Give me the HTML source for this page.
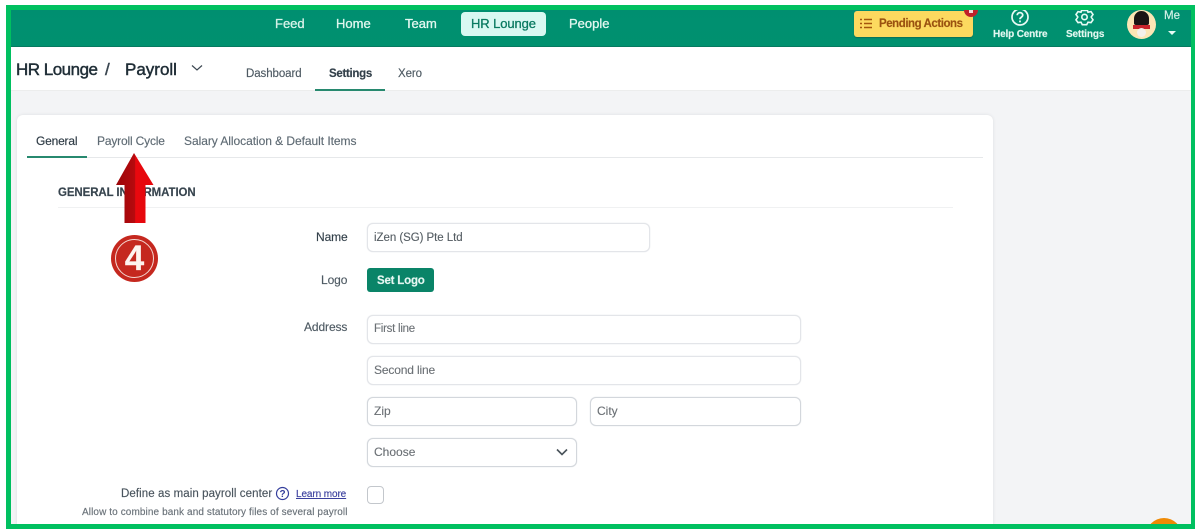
<!DOCTYPE html>
<html><head><meta charset="utf-8"><style>
*{box-sizing:border-box}
html,body{margin:0;padding:0;width:1196px;height:530px;overflow:hidden;background:#fff;font-family:"Liberation Sans",sans-serif}
#s{position:absolute;left:0;top:0;width:1196px;height:530px;overflow:hidden;filter:blur(.35px)}
.a{position:absolute}
.t{position:absolute;white-space:nowrap;line-height:1;-webkit-text-stroke:.15px currentColor}
.n{-webkit-text-stroke:.3px currentColor}
.in{position:absolute;background:#fff;border:1px solid #e3e5e9;border-radius:6px;box-shadow:0 0 1px #d5d8dc}
.ph{position:absolute;left:6px;white-space:nowrap;font-size:12px;line-height:1;color:#6b7075;-webkit-text-stroke:.12px currentColor}
</style></head><body><div id="s">
<div class="a" style="left:10px;top:90px;width:1181px;height:436px;background:#f3f4f6"></div>
<div class="a" style="left:10px;top:47px;width:1181px;height:44px;background:#fff;border-bottom:1px solid #eceded"></div>
<div class="a" style="left:10px;top:10px;width:1181px;height:37px;background:linear-gradient(#008f70,#00916f);border-bottom:1px solid #067a60"></div>

<div class="t n" style="left:275px;top:17px;font-size:13px;color:#d8f3ea">Feed</div>
<div class="t n" style="left:336px;top:17px;font-size:13px;color:#e2f7f0">Home</div>
<div class="t n" style="left:405px;top:17px;font-size:13px;color:#e2f7f0">Team</div>
<div class="a" style="left:461px;top:12px;width:85px;height:24px;background:#d9f8f2;border-radius:4px"></div>
<div class="t n" style="left:471px;top:17px;font-size:13px;color:#0a7a61;letter-spacing:-.1px">HR Lounge</div>
<div class="t n" style="left:569px;top:17px;font-size:13px;color:#e2f7f0">People</div>

<div class="a" style="left:854px;top:11px;width:119px;height:26px;background:#fcd95f;border-radius:3px;box-shadow:0 1px 1px #0a6f58"></div>
<svg class="a" style="left:859px;top:17px" width="14" height="13" viewBox="0 0 14 13" fill="none" stroke="#a5560d" stroke-width="1.5"><path d="M1 2.500h2M1 6.500h2M1 10.500h2M5 2.500h8M5 6.500h8M5 10.500h8"/></svg>
<div class="t" style="left:879px;top:19px;font-size:11.5px;font-weight:700;color:#9a5210;letter-spacing:-.45px">Pending Actions</div>
<div class="a" style="left:964px;top:10px;width:14px;height:7px;background:#c0202a;border-radius:0 0 7px 7px"></div>
<div class="a" style="left:969px;top:10px;width:4px;height:3px;background:#f4d9d9"></div>

<svg class="a" style="left:1010px;top:8px" width="20" height="18" viewBox="0 0 20 18" fill="none" stroke="#e8fbf5" stroke-width="1.7"><circle cx="10" cy="9" r="8"/><path d="M7.3 7.2c0-3.4 5.4-3.4 5.4 0 0 2.1-2.7 2-2.7 4" stroke-width="1.8"/><path d="M10 12.500v1.800" stroke-width="1.8"/></svg>
<div class="t" style="left:993px;top:30px;font-size:10px;font-weight:700;color:#e2f7f0;letter-spacing:-.15px">Help Centre</div>
<svg class="a" style="left:1075px;top:9px" width="19" height="17" viewBox="0 0 19 17" fill="none" stroke="#e8fbf5" stroke-width="1.6"><path d="M6.500 1.500 6 3.200 3 2.600 1 5.500 2.800 8 1 10.800 3 13.600 6 13.200 7.300 15.700h4.400L13 13.200l3 .4 2-2.800L16.200 8 18 5.500l-2-2.900-3 .6-.5-1.700z"/><circle cx="9.5" cy="8" r="2.7"/></svg>
<div class="t" style="left:1066px;top:30px;font-size:10px;font-weight:700;color:#e2f7f0;letter-spacing:-.15px">Settings</div>

<div class="a" style="left:1127px;top:10px;width:29px;height:29px;border-radius:50%;background:#fbe6b5"></div>
<div class="a" style="left:1134px;top:11px;width:15px;height:14px;border-radius:8px 8px 2px 2px;background:#1a1414"></div>
<div class="a" style="left:1133px;top:25px;width:17px;height:4px;background:#c8242c"></div>
<div class="a" style="left:1137px;top:28px;width:9px;height:9px;border-radius:50%;background:#f4f0ea"></div>
<div class="t" style="left:1164px;top:11px;font-size:11.5px;color:#d8f3ea">Me</div>
<div class="a" style="left:1168px;top:31px;width:0;height:0;border-left:4px solid transparent;border-right:4px solid transparent;border-top:4px solid #e8fbf5"></div>

<div class="t" style="left:16px;top:61px;font-size:17px;color:#1f2d36;letter-spacing:-.5px;-webkit-text-stroke:.45px #1f2d36">HR Lounge</div>
<div class="t" style="left:105px;top:61px;font-size:17px;color:#3a4650;-webkit-text-stroke:.45px #3a4650">/</div>
<div class="t" style="left:125px;top:61px;font-size:17px;color:#1f2d36;letter-spacing:0;-webkit-text-stroke:.45px #1f2d36">Payroll</div>
<svg class="a" style="left:190px;top:64px" width="14" height="9" viewBox="0 0 14 9" fill="none" stroke="#3d4852" stroke-width="1.2"><path d="M2 1.500l5 4.500 5-4.500"/></svg>
<div class="t" style="left:246px;top:69px;font-size:11.5px;color:#4e5a63;letter-spacing:-.08px">Dashboard</div>
<div class="t" style="left:329px;top:69px;font-size:11.5px;font-weight:700;color:#33404a;letter-spacing:-.3px">Settings</div>
<div class="t" style="left:398px;top:69px;font-size:11.5px;color:#4e5a63;letter-spacing:-.1px">Xero</div>
<div class="a" style="left:315px;top:89px;width:70px;height:2px;background:#27896f"></div>

<div class="a" style="left:17px;top:115px;width:976px;height:415px;background:#fff;border-radius:6px;box-shadow:0 0 3px #dcdee0"></div>
<div class="t" style="left:36px;top:135px;font-size:12px;color:#2d3a44;letter-spacing:-.2px">General</div>
<div class="t" style="left:97px;top:135px;font-size:12px;color:#5f6b74;letter-spacing:-.17px">Payroll Cycle</div>
<div class="t" style="left:184px;top:135px;font-size:12px;color:#5f6b74;letter-spacing:-.05px">Salary Allocation &amp; Default Items</div>
<div class="a" style="left:27px;top:157px;width:956px;height:1px;background:#e6e8ea"></div>
<div class="a" style="left:27px;top:156px;width:60px;height:2px;background:#27896f"></div>

<div class="t" style="left:58px;top:188px;font-size:11.5px;font-weight:700;color:#37444e;letter-spacing:-.1px">GENERAL INFORMATION</div>
<div class="a" style="left:58px;top:207px;width:895px;height:1px;background:#f0f1f2"></div>

<svg class="a" style="left:114px;top:153px" width="40" height="72" viewBox="0 0 40 72"><defs><linearGradient id="g" x1="0" x2="1" y1="0" y2="0"><stop offset="0" stop-color="#9a0508"/><stop offset=".5" stop-color="#b60a0e"/><stop offset=".52" stop-color="#e8080e"/><stop offset="1" stop-color="#e5070c"/></linearGradient></defs><path d="M20 0 2 32h8.500v38h21V32h8z" fill="url(#g)"/></svg>

<div class="a" style="left:111px;top:235px;width:47px;height:47px;border-radius:50%;background:#c5281f"></div>
<div class="a" style="left:115px;top:239px;width:39px;height:39px;border-radius:50%;border:1.5px solid #f4d8d2"></div>
<div class="t" style="left:111px;top:241px;width:47px;text-align:center;font-size:35px;font-weight:700;color:#fdf3ef">4</div>

<div class="t" style="left:316px;top:231px;font-size:12px;color:#33404a;letter-spacing:-.1px">Name</div>
<div class="in" style="left:367px;top:223px;width:283px;height:29px"><div class="ph" style="top:8.500px;font-size:11.5px;color:#555d63;letter-spacing:-.05px">iZen (SG) Pte Ltd</div></div>
<div class="t" style="left:321px;top:274px;font-size:12px;color:#4e5a63;letter-spacing:-.1px">Logo</div>
<div class="a" style="left:367px;top:268px;width:67px;height:24px;background:#0a8468;border-radius:3px"></div>
<div class="t" style="left:377px;top:276px;font-size:11.5px;font-weight:700;color:#e6f7f2;letter-spacing:-.2px">Set Logo</div>
<div class="t" style="left:304px;top:321px;font-size:12px;color:#4e5a63;letter-spacing:-.1px">Address</div>

<div class="in" style="left:367px;top:315px;width:434px;height:29px"><div class="ph" style="top:8px;font-size:11.5px;letter-spacing:-.25px">First line</div></div>
<div class="in" style="left:367px;top:356px;width:434px;height:29px"><div class="ph" style="top:7px;letter-spacing:-.15px">Second line</div></div>
<div class="in" style="left:367px;top:397px;width:210px;height:29px;border-color:#d3d7dc"><div class="ph" style="top:7px">Zip</div></div>
<div class="in" style="left:590px;top:397px;width:211px;height:29px;border-color:#d3d7dc"><div class="ph" style="top:7px">City</div></div>
<div class="in" style="left:367px;top:438px;width:210px;height:29px;border-color:#d3d7dc"><div class="ph" style="top:7px">Choose</div></div>
<svg class="a" style="left:555px;top:448px" width="14" height="9" viewBox="0 0 14 9" fill="none" stroke="#4a535a" stroke-width="1.6"><path d="M2 1.500l5 5 5-5"/></svg>

<div class="t" style="left:121px;top:489px;font-size:11.5px;color:#4a555e;letter-spacing:.08px">Define as main payroll center</div>
<svg class="a" style="left:275px;top:486px" width="15" height="15" viewBox="0 0 15 15" fill="none"><circle cx="7.5" cy="7.5" r="6" stroke="#343e9c" stroke-width="1.2"/><text x="7.5" y="11" font-size="10" font-weight="700" text-anchor="middle" fill="#343e9c" font-family="Liberation Sans">?</text></svg>
<div class="t" style="left:296px;top:490px;font-size:10px;color:#3a3f9e;text-decoration:underline;letter-spacing:-.1px">Learn more</div>
<div class="a" style="left:367px;top:486px;width:17px;height:18px;border:1px solid #c3c7cc;border-radius:4px;background:#fff"></div>
<div class="t" style="left:82px;top:508px;font-size:10px;color:#6a7279;letter-spacing:.1px">Allow to combine bank and statutory files of several payroll</div>

<div class="a" style="left:1146px;top:518px;width:36px;height:36px;border-radius:50%;background:#ef8a05"></div>

<div class="a" style="left:0;top:529px;width:1196px;height:1px;background:#fff"></div>
<div class="a" style="left:6px;top:5px;width:1189px;height:524px;border-style:solid;border-color:#00c060;border-width:5px 4.5px 5px 5px"></div>
</div></body></html>
